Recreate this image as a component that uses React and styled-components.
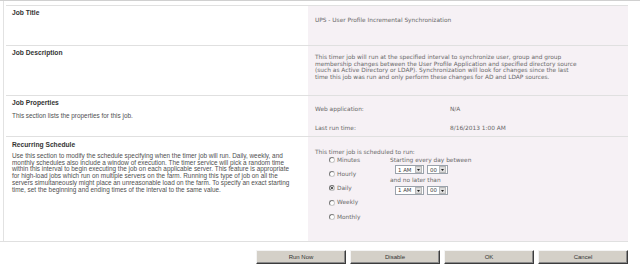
import React from "react";
import styled, { createGlobalStyle, css } from "styled-components";

const GlobalStyle = createGlobalStyle`
  html, body {
    margin: 0;
    padding: 0;
    background: #fff;
  }
  body {
    width: 640px;
    height: 270px;
    overflow: hidden;
  }
`;

const Page = styled.div`
  width: 640px;
  border-top: 1px solid #d0d0d0;
  font-family: "Liberation Sans", Arial, sans-serif;
`;

const Sections = styled.div`
  margin-left: 3px;
  width: 622px;
  padding: 4px 0 0 2px;
  border-left: 1px solid #e2e2e2;
`;

const Row = styled.div`
  display: grid;
  grid-template-columns: 302px 320px;
  height: ${(p) => p.$h}px;
  border-top: 1px solid #e0e0e0;
`;

const Label = styled.div`
  padding: ${(p) => p.$top || 3}px 6px 0;
`;

const LabelTitle = styled.div`
  font-weight: bold;
  font-size: 6.7px;
  line-height: 8px;
  color: #333;
`;

const LabelText = styled.div`
  margin-top: ${(p) => p.$gap || 5}px;
  font-size: 6.4px;
  line-height: 6.7px;
  color: #4f4f4f;
`;

const Line = styled.span`
  display: block;
  white-space: nowrap;
`;

const Value = styled.div`
  background: #f6f1f5;
  padding: ${(p) => p.$top || 8}px 7px 0;
  font-family: "DejaVu Sans", Verdana, sans-serif;
  font-size: 5.85px;
  line-height: 6.7px;
  color: #686868;
`;

const PropGrid = styled.div`
  display: grid;
  grid-template-columns: 135px auto;
  row-gap: 12px;
`;

const Schedule = styled.div`
  display: flex;
  margin-top: 1px;
`;

const RadioList = styled.div`
  display: flex;
  flex-direction: column;
  gap: 7.5px;
  width: 61px;
  margin-left: 14px;
`;

const Option = styled.div`
  display: flex;
  align-items: center;
  gap: 2px;
`;

const Radio = styled.span`
  width: 4px;
  height: 4px;
  border-radius: 50%;
  border: 1px solid;
  border-color: #7a7a7a #c8c8c8 #c8c8c8 #7a7a7a;
  background: #fff;
  ${(p) =>
    p.$checked &&
    css`
      background: #222;
      box-shadow: inset 0 0 0 1px #fff;
    `}
`;

const TimeColumn = styled.div`
  display: flex;
  flex-direction: column;
`;

const SelectRow = styled.div`
  display: flex;
  gap: 3px;
  margin: 2px 0 3px 5px;
`;

const Select = styled.div`
  box-sizing: border-box;
  display: flex;
  align-items: center;
  justify-content: space-between;
  width: ${(p) => p.$w}px;
  height: 9px;
  padding: 0 1px 0 2px;
  border: 1px solid #9aa2ab;
  background: #fff;
  font-size: 5.4px;
  color: #444;
`;

const SelectButton = styled.span`
  display: flex;
  align-items: center;
  justify-content: center;
  width: 5px;
  height: 5px;
  background: #dcdcdc;
  border: 1px solid #b8b8b8;
`;

const BottomRule = styled.div`
  width: 628px;
  border-top: 1px solid #e0e0e0;
`;

const ButtonBar = styled.div`
  display: flex;
  justify-content: flex-end;
  gap: 4px;
  width: 628px;
  padding-top: 8px;
`;

const Button = styled.button`
  width: 90px;
  height: 14px;
  padding: 0;
  background: #d4d0c8;
  border: 1px solid;
  border-color: #f4f4f4 #3c3c3c #3c3c3c #f4f4f4;
  box-shadow: inset -1px -1px 0 #8a8a8a;
  font-family: "Liberation Sans", Arial, sans-serif;
  font-size: 6px;
  color: #333;
`;

const Arrow = () => (
  <svg width="3" height="2" viewBox="0 0 3 2">
    <path d="M0 0h3L1.5 2z" fill="#222" />
  </svg>
);

const description = [
  "This timer job will run at the specified interval to synchronize user, group and group",
  "membership changes between the User Profile Application and specified directory source",
  "(such as Active Directory or LDAP). Synchronization will look for changes since the last",
  "time this job was run and only perform these changes for AD and LDAP sources.",
];

const scheduleHelp = [
  "Use this section to modify the schedule specifying when the timer job will run. Daily, weekly, and",
  "monthly schedules also include a window of execution. The timer service will pick a random time",
  "within this interval to begin executing the job on each applicable server. This feature is appropriate",
  "for high-load jobs which run on multiple servers on the farm. Running this type of job on all the",
  "servers simultaneously might place an unreasonable load on the farm. To specify an exact starting",
  "time, set the beginning and ending times of the interval to the same value.",
];

const options = ["Minutes", "Hourly", "Daily", "Weekly", "Monthly"];

const TimePicker = () => (
  <SelectRow>
    <Select $w={29}>
      1 AM
      <SelectButton>
        <Arrow />
      </SelectButton>
    </Select>
    <Select $w={21}>
      00
      <SelectButton>
        <Arrow />
      </SelectButton>
    </Select>
  </SelectRow>
);

const App = () => {
  return (
    <Page>
      <GlobalStyle />
      <Sections>
        <Row $h={39}>
          <Label>
            <LabelTitle>Job Title</LabelTitle>
          </Label>
          <Value $top={11}>UPS - User Profile Incremental Synchronization</Value>
        </Row>

        <Row $h={49}>
          <Label>
            <LabelTitle>Job Description</LabelTitle>
          </Label>
          <Value>
            {description.map((l) => (
              <Line key={l}>{l}</Line>
            ))}
          </Value>
        </Row>

        <Row $h={40}>
          <Label>
            <LabelTitle>Job Properties</LabelTitle>
            <LabelText $gap={6}>This section lists the properties for this job.</LabelText>
          </Label>
          <Value $top={10}>
            <PropGrid>
              <span>Web application:</span>
              <span>N/A</span>
              <span>Last run time:</span>
              <span>8/16/2013 1:00 AM</span>
            </PropGrid>
          </Value>
        </Row>

        <Row $h={104}>
          <Label $top={4}>
            <LabelTitle>Recurring Schedule</LabelTitle>
            <LabelText $gap={4}>
              {scheduleHelp.map((l) => (
                <Line key={l}>{l}</Line>
              ))}
            </LabelText>
          </Label>
          <Value $top={12}>
            <div>This timer job is scheduled to run:</div>
            <Schedule>
              <RadioList>
                {options.map((o) => (
                  <Option key={o}>
                    <Radio $checked={o === "Daily"} />
                    {o}
                  </Option>
                ))}
              </RadioList>
              <TimeColumn>
                <span>Starting every day between</span>
                <TimePicker />
                <span>and no later than</span>
                <TimePicker />
              </TimeColumn>
            </Schedule>
          </Value>
        </Row>
      </Sections>
      <BottomRule />
      <ButtonBar>
        <Button>Run Now</Button>
        <Button>Disable</Button>
        <Button>OK</Button>
        <Button>Cancel</Button>
      </ButtonBar>
    </Page>
  );
};

export default App;
